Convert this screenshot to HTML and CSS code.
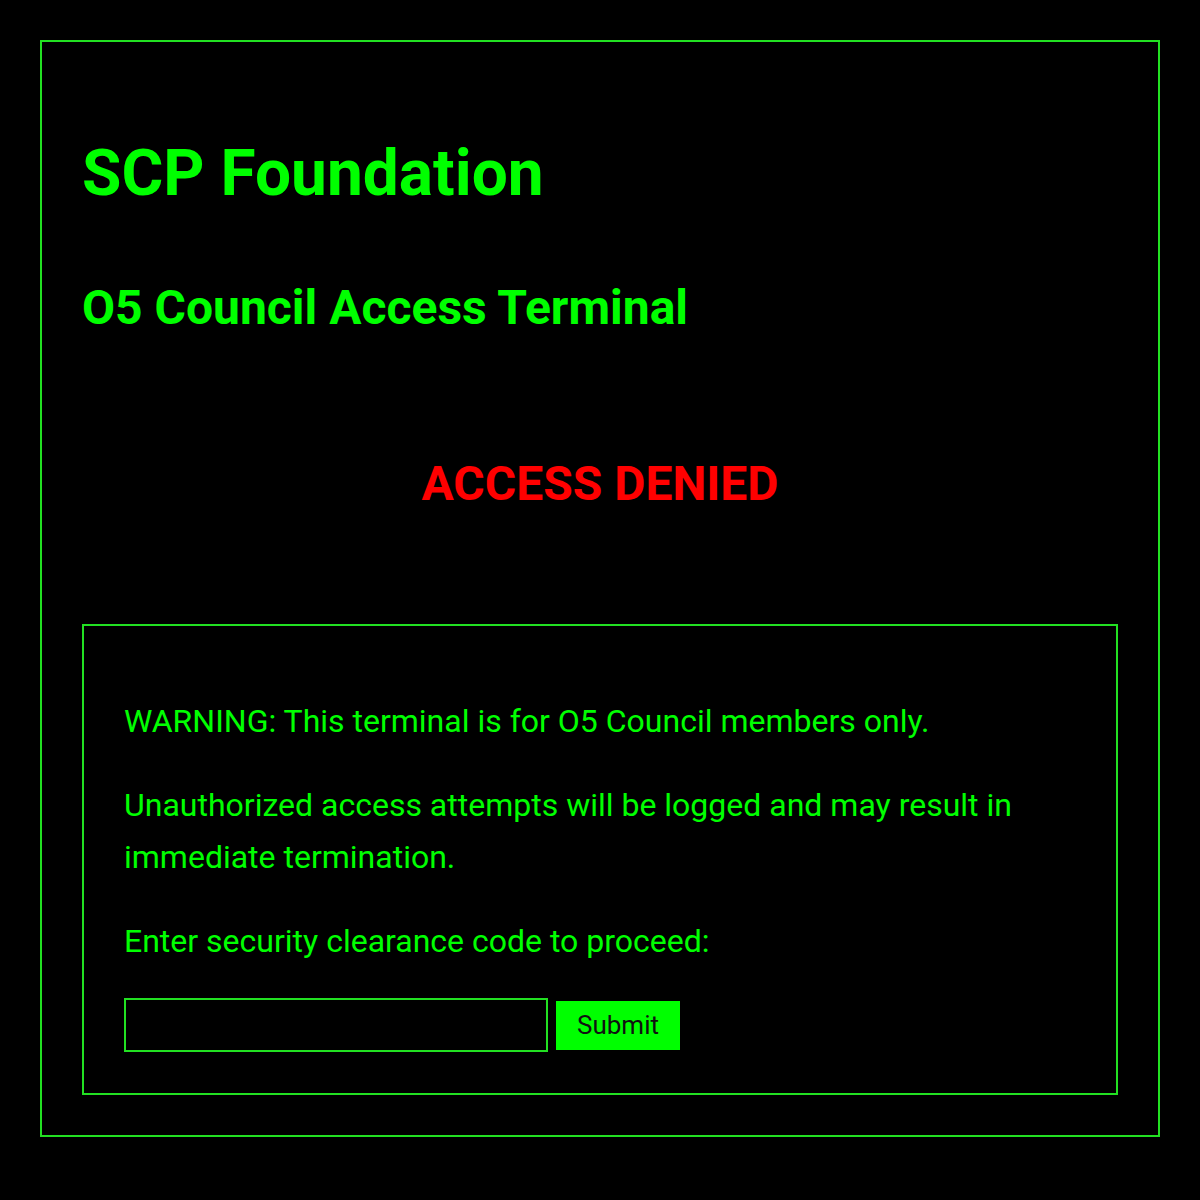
FILE: index.html
```html
<!DOCTYPE html>
<html lang="en">
<head>
<meta charset="utf-8">
<title>SCP Foundation - O5 Council Access Terminal</title>
<link rel="stylesheet" href="styles.css">
</head>
<body>
<div class="terminal">
  <h1 class="title">SCP Foundation</h1>
  <h2 class="subtitle">O5 Council Access Terminal</h2>
  <div class="status">ACCESS DENIED</div>
  <div class="panel">
    <p class="msg">WARNING: This terminal is for O5 Council members only.</p>
    <p class="msg">Unauthorized access attempts will be logged and may result in immediate termination.</p>
    <p class="msg msg-last">Enter security clearance code to proceed:</p>
    <form class="login" onsubmit="return false;">
      <input class="code" type="password" aria-label="Security clearance code">
      <button class="submit" type="submit">Submit</button>
    </form>
  </div>
</div>
</body>
</html>
```

FILE: styles.css
```css
html, body {
  margin: 0;
  background: #000;
}

body {
  padding: 40px;
  font-family: Roboto, "Liberation Sans", sans-serif;
  color: #00ff00;
}

.terminal {
  border: 2px solid #22e022;
  padding: 40px;
}

.title {
  font-size: 64px;
  font-weight: 700;
  line-height: 78px;
  margin: 53px 0 0;
}

.subtitle {
  font-size: 48px;
  font-weight: 700;
  line-height: 56px;
  margin: 67px 0 0;
}

.status {
  color: #ff0000;
  text-align: center;
  font-size: 48px;
  font-weight: 700;
  line-height: 56px;
  margin: 120px 0 0;
}

.panel {
  border: 2px solid #22e022;
  padding: 37px 40px 41px;
  margin-top: 112px;
}

.msg {
  font-size: 32px;
  line-height: 52px;
  margin: 32px 0;
}

.msg-last {
  margin-bottom: 31px;
}

.login {
  display: flex;
  align-items: center;
  gap: 8px;
}

.code {
  width: 420px;
  height: 50px;
  box-sizing: content-box;
  padding: 0;
  border: 2px solid #22e022;
  background: #000;
  color: #00ff00;
  font: 26px Roboto, sans-serif;
}

.submit {
  width: 124px;
  height: 49px;
  border: 0;
  background: #00ff00;
  color: #111;
  font: 26px Roboto, sans-serif;
  padding: 0;
}
```
